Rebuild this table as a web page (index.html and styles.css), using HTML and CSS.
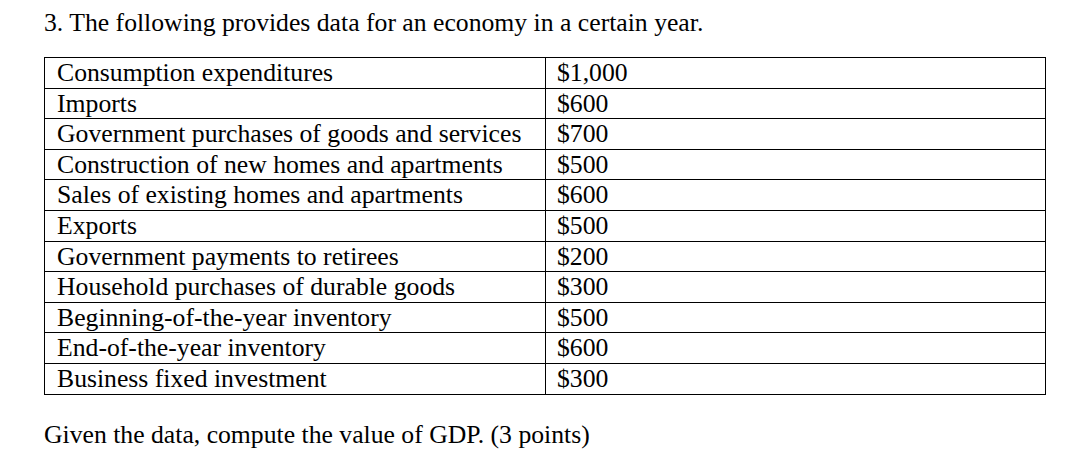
FILE: index.html
```html
<!DOCTYPE html>
<html>
<head>
<meta charset="utf-8">
<link rel="stylesheet" href="styles.css">
</head>
<body>
<div class="page">
  <p class="title">3. The following provides data for an economy in a certain year.</p>
  <table class="data">
    <tr><td class="label">Consumption expenditures</td><td class="value">$1,000</td></tr>
    <tr><td class="label">Imports</td><td class="value">$600</td></tr>
    <tr><td class="label">Government purchases of goods and services</td><td class="value">$700</td></tr>
    <tr><td class="label">Construction of new homes and apartments</td><td class="value">$500</td></tr>
    <tr><td class="label">Sales of existing homes and apartments</td><td class="value">$600</td></tr>
    <tr><td class="label">Exports</td><td class="value">$500</td></tr>
    <tr><td class="label">Government payments to retirees</td><td class="value">$200</td></tr>
    <tr><td class="label">Household purchases of durable goods</td><td class="value">$300</td></tr>
    <tr><td class="label">Beginning-of-the-year inventory</td><td class="value">$500</td></tr>
    <tr><td class="label">End-of-the-year inventory</td><td class="value">$600</td></tr>
    <tr><td class="label">Business fixed investment</td><td class="value">$300</td></tr>
  </table>
  <p class="question">Given the data, compute the value of GDP. (3 points)</p>
</div>
</body>
</html>
```
FILE: styles.css
```css
html, body {
  margin: 0;
  padding: 0;
  background: #ffffff;
}
.page {
  padding: 8px 0 0 44px;
  font-family: "Liberation Serif", "Times New Roman", serif;
  color: #000;
}
.title {
  margin: 0;
  font-size: 25.7px;
  line-height: 30px;
}
.data {
  margin-top: 19px;
  border-collapse: collapse;
  width: 1002px;
  font-size: 25.7px;
}
.data td {
  border: 1px solid #000;
  padding: 0;
  height: 29.6px;
  line-height: 29.6px;
  white-space: nowrap;
  vertical-align: middle;
}
.data .label {
  width: 488px;
  padding-left: 12px;
}
.data .value {
  padding-left: 11px;
}
.question {
  margin: 25px 0 0 0;
  font-size: 25.7px;
  line-height: 30px;
}
```
